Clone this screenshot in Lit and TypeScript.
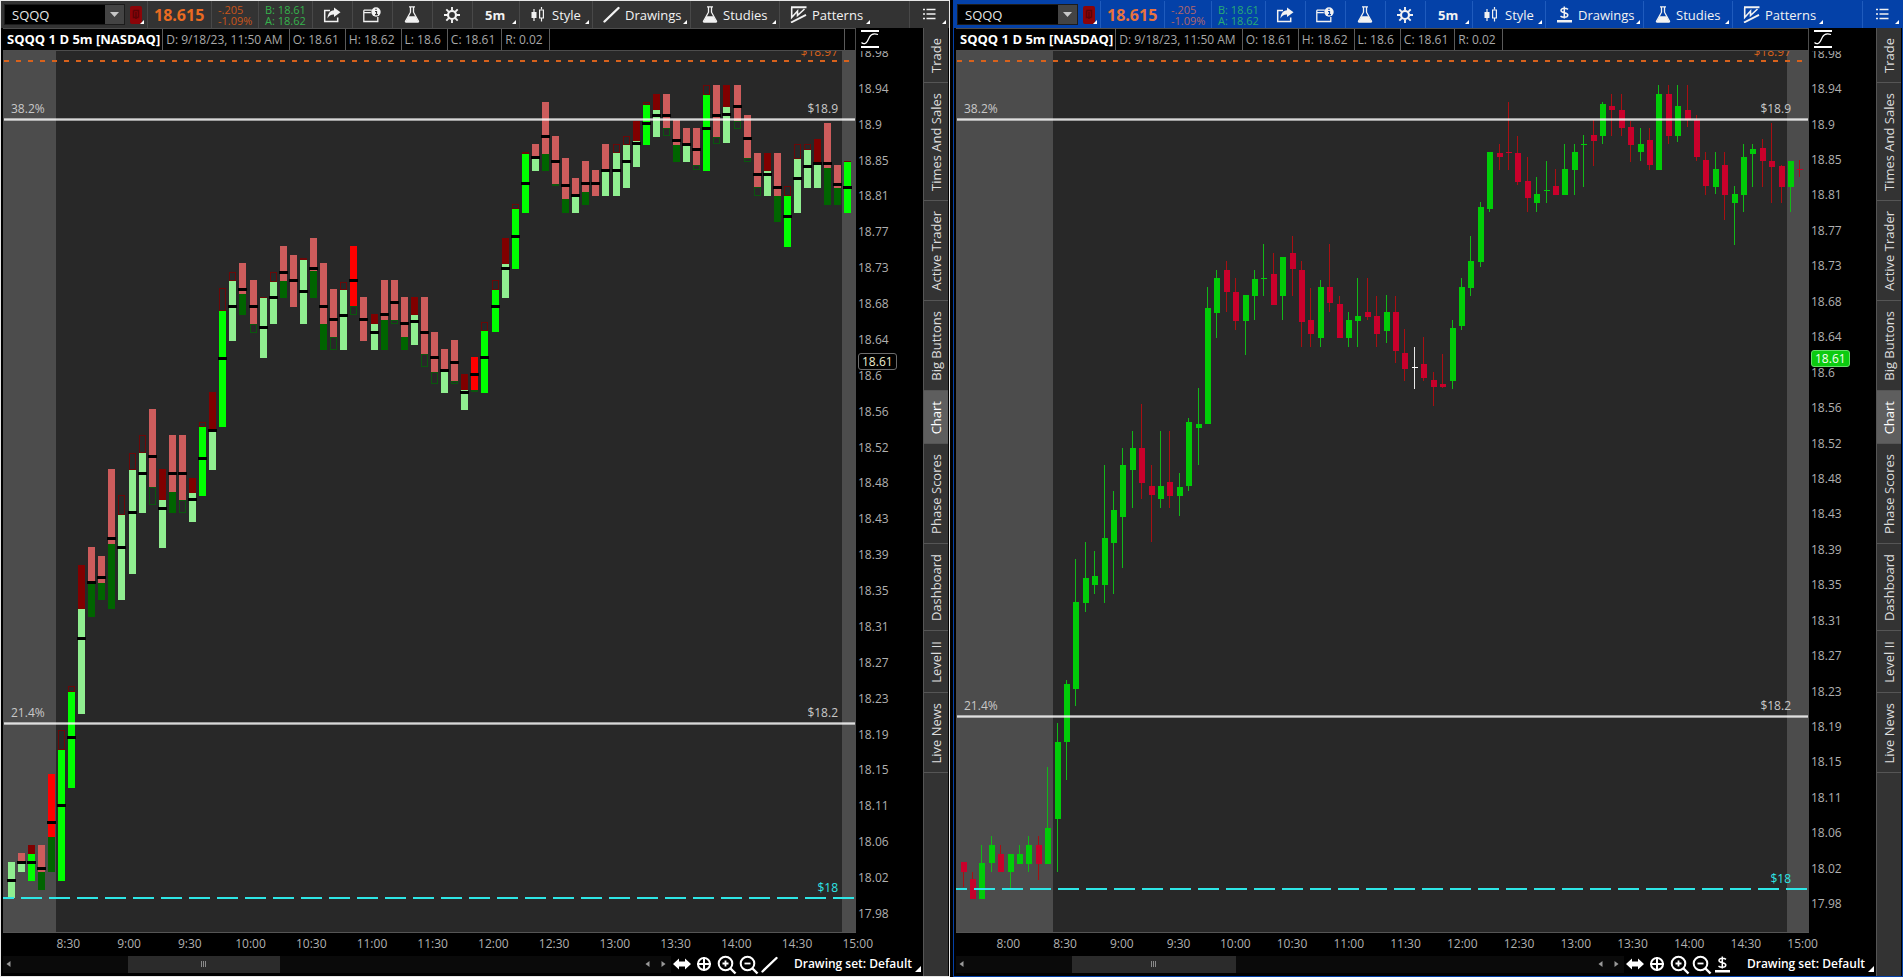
import { LitElement, html, svg, css, nothing } from "lit";
import { customElement, property } from "lit/decorators.js";

/** Drawing area shared by both charts, in chart units. */
const PLOT_W = 853;
const PLOT_H = 881;

type Level = { y: number; kind: "solid" | "dash" | "dots"; label: string; price: string };

interface ChartConfig {
  mode: "profile" | "candles";
  sessions: [number, number][];
  levels: Level[];
  times: string[];
  timePad: string;
  axisPad: string;
  tagY: number;
  thumb: [number, number, number];
  tailCell: boolean;
  tool: "line" | "dollar";
}

const PRICES = [
  "18.98", "18.94", "18.9", "18.85", "18.81", "18.77", "18.73", "18.68", "18.64",
  "18.6", "18.56", "18.52", "18.48", "18.43", "18.39", "18.35", "18.31", "18.27",
  "18.23", "18.19", "18.15", "18.11", "18.06", "18.02", "17.98",
];

const GADGETS = [
  "Trade", "Times And Sales", "Active Trader", "Big Buttons", "Chart",
  "Phase Scores", "Dashboard", "Level II", "Live News",
];

const READOUT = ["D: 9/18/23, 11:50 AM", "O: 18.61", "H: 18.62", "L: 18.6", "C: 18.61", "R: 0.02"];

const FILLS: Record<string, string> = {
  r: "#ff0000", R: "#800000", p: "#cd5c5c",
  g: "#00ff00", G: "#006400", l: "#90ee90",
};
const OUTLINES: Record<string, string> = { o: "#6a0808", u: "#0a560e" };

/** One bar per entry: "<segment code><top>-<bottom> ... k<mark>". */
const PROFILE = `l811-847 k829|p802-811 l811-821 k811|R794-803 g803-830 k811|p794-821 G821-839 k817
r723-786 G786-821 k771|o679-699 g699-830 k754|o635-641 g641-737 k686|R514-558 l558-663 k587
p496-532 G532-566 k531|p505-532 G532-549 k526|p418-493 G493-558 k487|o444-464 l464-549 k496
o402-419 l419-523 k461|o384-402 l402-462 k422|p358-436 u436-454 k405|R418-449 l449-497 k457
p384-441 G441-462 k422|p384-449 u449-462 k422|R427-442 l442-471 k448|o371-376 g376-445 k407
R341-379 l380-419 k379|o237-260 g260-376 k307|o221-230 l230-290 k255|p212-243 G243-264 k238
p229-273 u273-282 k255|o246-247 l247-307 k276|o221-231 l231-273 k246|p195-230 G230-247 k221
p204-256 k229|o207-209 l209-273 k240|p187-220 G220-247 k217|p212-273 G273-299 k255
p238-286 u286-299 k268|o231-239 l239-299 k264|r195-255 u255-264 k229|p246-290 k268
R263-273 l273-299 k281|p229-269 G269-299 k263|p229-269 u269-273 k251|p246-286 G286-299 k272
R246-264 l264-294 k270|p246-303 u303-316 k281|p281-321 u321-333 k306|p298-320 l320-342 k319
p289-330 u330-333 k311|R323-339 l339-359 k341|r306-339 u339-341 k323|o271-280 g280-342 k306
o229-239 g239-281 k255|R187-213 l213-247 k217|o153-158 g158-218 k185|o101-103 g103-162 k132
p93-107 l107-120 k106|p51-103 G103-120 k85|p85-133 u133-135 k110|p107-148 G148-162 k134
p127-144 l145-162 k144|p110-141 G141-154 k132|p119-145 k132|p93-120 l120-145 k119
o93-102 l102-145 k119|o85-94 l94-137 k110|R70-90 l90-116 k92|o51-54 g54-94 k72
R43-59 l59-86 k64|p43-77 u77-85 k64|p69-94 G94-111 k89|p77-93 l94-111 k93
p77-114 u114-119 k98|o34-44 g44-120 k77|p34-86 u86-93 k64|R34-56 l56-92 k63
p34-70 u70-78 k55|p64-107 u107-111 k87|p102-136 u136-145 k123|R102-120 l120-145 k123
p102-145 G145-171 k136|o135-145 g145-196 k165|o93-108 l108-162 k127|o93-99 l99-137 k115
R88-111 l112-137 k112|p72-117 G117-154 k112|p114-137 G137-154 k133|o110-111 g111-162 k136`;

/** One candle per entry: colour, high, body top, body bottom, low. */
const CANDLES = `r 811 811 821 836,r 821 828 848 848,g 794 812 848 848,g 785 794 812 821,r 794 803 821 821,
g 803 803 821 837,g 794 803 813 813,g 785 794 813 821,r 785 794 813 829,g 716 777 813 813,
g 672 691 768 821,g 629 633 691 729,g 508 551 638 655,g 491 527 552 561,g 500 525 534 543,
g 414 487 534 552,g 440 459 492 543,g 397 414 466 517,g 380 397 419 457,r 353 397 432 448,
r 414 435 444 491,g 380 435 448 457,r 380 431 445 457,g 422 436 445 465,g 367 371 435 440,
g 337 373 377 414,g 236 257 373 373,g 219 227 262 287,r 210 219 241 261,r 227 241 270 279,
g 244 244 270 304,g 219 228 245 269,g 193 227 228 245,r 202 223 254 254,g 206 206 245 269,
r 185 202 218 245,r 210 219 271 296,r 237 269 283 296,g 229 236 287 296,r 193 236 252 261,
r 245 253 287 287,g 261 269 287 296,g 227 265 270 296,r 227 261 266 269,r 245 265 283 296,
g 244 261 280 292,r 245 261 300 312,r 278 302 318 330,w 296 316 317 338,r 286 313 327 330,
r 321 329 336 355,r 303 333 336 337,g 269 277 330 338,g 227 236 275 279,g 185 210 237 245,
g 151 156 211 216,g 101 101 158 161,r 93 102 106 119,r 51 101 102 119,r 85 102 131 134,
r 106 130 147 161,g 126 143 152 161,g 110 139 140 152,r 118 135 144 144,g 93 118 144 144,
g 93 101 119 144,g 84 93 94 136,r 69 84 90 115,g 51 53 85 93,r 43 55 59 85,
r 43 59 77 85,r 70 76 94 111,g 77 93 101 110,r 77 89 114 119,g 34 43 119 119,
r 34 43 85 93,g 34 55 85 91,r 34 59 69 76,r 64 69 106 110,r 101 109 135 144,
g 101 118 136 143,r 101 114 144 169,g 135 143 152 194,g 93 106 144 161,g 93 98 103 136,
r 88 97 110 136,r 72 110 116 152,r 114 115 136 152,g 110 110 136 161,r 109 118 119 126`;

const BODY: Record<string, string> = { r: "#c9002b", g: "#00cc08", w: "#ffffff" };
const WICK: Record<string, string> = { r: "#a80f12", g: "#12b818", w: "#e8e8e8" };

const LEFT: ChartConfig = {
  mode: "profile",
  sessions: [[0, 53], [839, 853]],
  levels: [
    { y: 10, kind: "dots", label: "", price: "$18.97" },
    { y: 68, kind: "solid", label: "38.2%", price: "$18.9" },
    { y: 672, kind: "solid", label: "21.4%", price: "$18.2" },
    { y: 847, kind: "dash", label: "", price: "$18" },
  ],
  times: ["8:30", "9:00", "9:30", "10:00", "10:30", "11:00", "11:30", "12:00", "12:30",
    "13:00", "13:30", "14:00", "14:30", "15:00"],
  timePad: "pad-a",
  axisPad: "axis-a",
  tagY: 310,
  thumb: [125, 152, 391],
  tailCell: true,
  tool: "line",
};

const RIGHT: ChartConfig = {
  mode: "candles",
  sessions: [[0, 97], [831, 853]],
  levels: [
    { y: 10, kind: "dots", label: "", price: "$18.97" },
    { y: 68, kind: "solid", label: "38.2%", price: "$18.9" },
    { y: 665, kind: "solid", label: "21.4%", price: "$18.2" },
    { y: 838, kind: "dash", label: "", price: "$18" },
  ],
  times: ["8:00", "8:30", "9:00", "9:30", "10:00", "10:30", "11:00", "11:30", "12:00", "12:30",
    "13:00", "13:30", "14:00", "14:30", "15:00"],
  timePad: "pad-b",
  axisPad: "axis-b",
  tagY: 307,
  thumb: [116, 164, 388],
  tailCell: false,
  tool: "dollar",
};

const FLASK = svg`<path d="M5 .8h6M6.5 1v5.2L1.6 15a.6.6 0 0 0 .5 1h11.8a.6.6 0 0 0 .5-1L9.500 6.200V1" fill="none" stroke="currentColor" stroke-width="1.300"/><path d="M4.600 10.200h6.800L14.500 16h-13z" fill="currentColor"/>`;
const DOLLAR = svg`<path d="M12 3.400C11 2.600 9.800 2.300 8.300 2.300 6.400 2.300 5 3.100 5 4.500c0 3 6.800 1.500 6.800 4.400 0 1.500-1.500 2.300-3.500 2.300-1.500 0-2.900-.4-3.800-1.100M8.300.5v12" fill="none" stroke="currentColor" stroke-width="1.500"/><path d="M1 14h15v2.500H1z" fill="currentColor"/>`;

const ICONS: Record<string, unknown> = {
  share: html`<svg width="18" height="16" viewBox="0 0 18 16"><path d="M7 3.500H1.700v11h13v-4" fill="none" stroke="currentColor" stroke-width="1.500"/><path d="M11 .5 17.500 5.200 11 10V7.400C8 7.300 5.800 8.500 4.500 11.500 4.700 6.800 6.800 3.700 11 3.300z" fill="currentColor"/></svg>`,
  info: html`<svg width="18" height="16" viewBox="0 0 18 16"><path d="M.8 3.200h8M.8 3.200v11.300h14V10M.8 5.700h7" fill="none" stroke="currentColor" stroke-width="1.300"/><circle cx="13" cy="5" r="4.700" fill="currentColor"/><path d="M12 4.500h1.500v3M12 7.700h3M13 1.800v1.300" fill="none" stroke="var(--bar)" stroke-width="1.200"/></svg>`,
  flask: html`<svg width="16" height="17" viewBox="0 0 16 17">${FLASK}</svg>`,
  gear: html`<svg width="16" height="16" viewBox="0 0 16 16"><circle cx="8" cy="8" r="4" fill="none" stroke="currentColor" stroke-width="2.200"/><path d="M8 0v3.500M8 12.500V16M0 8h3.500M12.500 8H16M2.300 2.300l2.500 2.500M11.200 11.200l2.500 2.500M13.700 2.300l-2.500 2.500M4.800 11.200l-2.500 2.500" stroke="currentColor" stroke-width="1.900"/></svg>`,
  style: html`<svg width="14" height="16" viewBox="0 0 14 16"><path d="M3 2v12M10.500 0v2.500M10.500 11v3.500" stroke="currentColor" stroke-width="1.200"/><path d="M.5 5h5v6h-5z" fill="currentColor"/><path d="M8.600 3h3.800v8H8.600z" fill="none" stroke="currentColor" stroke-width="1.200"/></svg>`,
  line: html`<svg width="17" height="17" viewBox="0 0 17 17"><path d="M1.500 15.500 15.500 2" stroke="currentColor" stroke-width="2.400" stroke-linecap="round"/></svg>`,
  dollar: html`<svg width="17" height="17" viewBox="0 0 17 17">${DOLLAR}</svg>`,
  patterns: html`<svg width="17" height="17" viewBox="0 0 17 17"><path d="M1 1.200h15.500M1 16.500 16 8.800" stroke="currentColor" stroke-width="1.900" fill="none"/><path d="M1.700 2v9.500L7.500 5v4.500L14.500 3" fill="none" stroke="currentColor" stroke-width="1.600"/></svg>`,
  list: html`<svg width="13" height="13" viewBox="0 0 13 13"><path d="M0 1.500h2M3.500 1.500H12.500M0 6h2M3.500 6H12.500M0 10.500h2M3.500 10.500H12.500" stroke="currentColor" stroke-width="1.500"/></svg>`,
  curve: html`<svg width="18" height="18" viewBox="0 0 18 18"><path d="M0 1h18M0 17h18" stroke="#fff" stroke-width="2"/><path d="M.5 12.500c2 2 4.500 1.500 6-1.500l2-4c1.500-3 4-4 8.500-2.500" fill="none" stroke="#fff" stroke-width="1.300"/></svg>`,
  pan: html`<svg width="18" height="12" viewBox="0 0 18 12"><path d="M0 6 6 .5V3.500h6V.5L18 6l-6 5.500v-3H6v3z" fill="#fff"/></svg>`,
  cross: html`<svg width="18" height="16" viewBox="0 0 18 16"><circle cx="9" cy="8" r="6" fill="none" stroke="#fff" stroke-width="2"/><path d="M9 1v14M2 8h14" stroke="#fff" stroke-width="2"/></svg>`,
  zoomin: html`<svg width="20" height="20" viewBox="0 0 20 20"><circle cx="8.500" cy="8.500" r="6.800" fill="none" stroke="#fff" stroke-width="2"/><path d="M13.500 13.500l5 5" stroke="#fff" stroke-width="2.400"/><path d="M8.500 5.500v6M5.500 8.500h6" stroke="#fff" stroke-width="1.800"/></svg>`,
  zoomout: html`<svg width="20" height="20" viewBox="0 0 20 20"><circle cx="8.500" cy="8.500" r="6.800" fill="none" stroke="#fff" stroke-width="2"/><path d="M13.500 13.500l5 5" stroke="#fff" stroke-width="2.400"/><path d="M5.500 8.500h6" stroke="#fff" stroke-width="1.800"/></svg>`,
  badge: html`<svg width="12" height="18" viewBox="0 0 12 18"><rect width="12" height="18" rx="2" fill="#8c0408"/><path d="M3.500 4.500h5v7M8.500 11.500h-5v-7M6 6v7" fill="none" stroke="#5c0306" stroke-width="1.500"/></svg>`,
};

@customElement("price-chart")
export class PriceChart extends LitElement {
  @property({ attribute: false }) config!: ChartConfig;

  static styles = css`
    :host { display: block; position: relative; overflow: hidden; background: #282828; }
    .plot { position: absolute; inset: 0; width: 100%; height: 100%; display: block; }
    .level { position: absolute; font-size: 12px; line-height: 16px; padding-bottom: 2px; color: #c8c8c8; }
    .name { left: 8px; }
    .price { right: 18px; }
    .dash { color: #2ee6e6; }
    .dots { color: #d8621c; padding-bottom: 1px; }
  `;

  private bars() {
    return PROFILE.split(/[|\n]/).map((bar, i) => {
      const x = 5 + 10 * i + Math.floor(i / 12);
      return bar.split(" ").map((part) => {
        const code = part[0];
        const [top, bottom] = part.slice(1).split("-").map(Number);
        if (code === "k") return svg`<rect x=${x - 1} y=${top - 1} width="9" height="3" fill="#000"/>`;
        if (OUTLINES[code]) {
          return svg`<rect x=${x + 0.5} y=${top + 0.5} width="6" height=${Math.max(bottom - top - 1, 1)} fill="none" stroke=${OUTLINES[code]}/>`;
        }
        return svg`<rect x=${x} y=${top} width="7" height=${bottom - top} fill=${FILLS[code]}/>`;
      });
    });
  }

  private candles() {
    return CANDLES.split(",").map((entry, i) => {
      const [code, ...rest] = entry.trim().split(" ");
      const [high, top, bottom, low] = rest.map(Number);
      const x = 5 + Math.floor(9.404 * i);
      return svg`
        <rect x=${x + 2} y=${high} width="1" height=${low - high} fill=${WICK[code]}/>
        <rect x=${x} y=${top} width="6" height=${bottom - top} fill=${BODY[code]}/>`;
    });
  }

  private line(l: Level) {
    if (l.kind === "dash") {
      return svg`<line x1="0" x2="852" y1=${l.y} y2=${l.y} stroke="#2ee6e6" stroke-width="2" stroke-dasharray="21 7" stroke-dashoffset="10"/>`;
    }
    if (l.kind === "dots") {
      return svg`<line x1="1" x2="852" y1=${l.y} y2=${l.y} stroke="#d8621c" stroke-width="2" stroke-dasharray="5 7"/>`;
    }
    return svg`
      <rect x="1" y=${l.y - 1} width="851" height="3" fill="#fff" fill-opacity="0.55"/>
      <rect x="1" y=${l.y} width="851" height="1" fill="#fff" fill-opacity="0.6"/>`;
  }

  render() {
    const c = this.config;
    return html`
      <svg class="plot" viewBox="0 0 ${PLOT_W} ${PLOT_H}" preserveAspectRatio="none" shape-rendering="crispEdges" role="img" aria-label="SQQQ five minute price chart">
        ${c.sessions.map(([a, b]) => svg`<rect x=${a} y="0" width=${b - a} height=${PLOT_H} fill="#4c4c4c"/>`)}
        ${c.mode === "profile" ? this.bars() : this.candles()}
        ${c.levels.map((l) => this.line(l))}
      </svg>
      ${c.levels.map((l) => {
        const bottom = `bottom:${(100 * (PLOT_H - l.y)) / PLOT_H}%`;
        return html`
          ${l.label ? html`<span class="level name" style=${bottom}>${l.label}</span>` : nothing}
          <span class="level price ${l.kind}" style=${bottom}>${l.price}</span>`;
      })}
    `;
  }
}

@customElement("chart-panel")
export class ChartPanel extends LitElement {
  @property({ attribute: false }) config!: ChartConfig;
  @property({ type: Boolean, reflect: true }) active = false;

  static styles = css`
    :host {
      --bar: #333333;
      --rule: #484848;
      --edge: #e6e6e6;
      display: grid;
      grid-template: 27px minmax(0, 1fr) / minmax(0, 1fr) 25px;
      border: 1px solid var(--edge);
      padding: 0 1px 0 2px;
      background: #000;
      color: #e4e4e4;
      min-width: 0;
    }
    :host([active]) {
      --bar: #0441a8;
      --rule: #1f5bbd;
      --edge: #0441a8;
    }
    button, select { font: inherit; color: inherit; border: 0; background: none; padding: 0; margin: 0; border-radius: 0; }
    svg { display: block; flex: none; }

    .toolbar {
      grid-column: 1 / -1; display: flex; background: var(--bar); margin: 0 -1px 0 -2px;
      padding-left: 3px; font-size: 13px; line-height: 18px;
    }
    .symbol { position: relative; width: 121px; height: 21px; margin-top: 3px; background: #000; }
    .symbol select { appearance: none; width: 100%; height: 100%; padding-left: 7px; box-sizing: border-box; border: 1px solid #1c1c1c; font-size: 13px; color: #e8e8e8; }
    .arrow { position: absolute; right: 1px; top: 1px; width: 19px; height: 19px; background: #444; pointer-events: none; display: grid; place-items: center; }
    .link { width: 22px; padding-left: 5px; justify-content: flex-start; }
    .cell { position: relative; box-sizing: border-box; border-left: 1px solid var(--rule); display: flex; align-items: center; color: #f2f2f2; }
    .cell.first { border-left: 0; }
    .last { width: 64px; padding-left: 6px; color: #ea6b22; font-weight: 700; font-size: 16px; }
    .stack { font-size: 11px; line-height: 11px; padding-left: 6px; align-items: flex-start; justify-content: center; flex-direction: column; }
    .change { width: 47px; color: #c9551a; }
    .quote { width: 54px; color: #35b24c; }
    :host([active]) .change { color: #b2666a; }
    :host([active]) .last { color: #e8733e; }
    :host([active]) .quote { color: #27ab74; }
    .icon { width: 40px; justify-content: center; padding-right: 2px; }
    .span { width: 47px; padding-left: 12px; font-weight: 700; }
    .menu { gap: 5px; padding-left: 10px; }
    .w-style { width: 73px; gap: 7px; padding-left: 11px; }
    .w-draw { width: 98px; }
    .w-study { width: 89px; padding-left: 11px; }
    .w-pattern { flex: 1; }
    .w-list { width: 40px; padding-left: 13px; }
    .more::after {
      content: ""; position: absolute; right: 3px; bottom: 4px;
      border: 2px solid transparent; border-right-color: #fff; border-bottom-color: #fff;
    }
    .w-pattern::after { right: auto; left: 86px; }

    .main { display: grid; grid-template: 23px minmax(0, 1fr) 22px 21px / minmax(0, 1fr) 67px; min-height: 0; }
    .readout {
      display: flex; box-sizing: border-box; border: solid #4d4d4d; border-width: 1px 1px 1px 0;
      font-size: 12px; line-height: 21px; color: #a8a8a8; white-space: nowrap; overflow: hidden;
    }
    .readout span { border-right: 1px solid #5a5a5a; padding: 0 6px 0 3px; }
    .readout .title { color: #fff; font-size: 13px; font-weight: 700; padding: 0 2px 0 4px; }
    .readout .tail { margin-left: auto; border-right: 0; border-left: 1px solid #5a5a5a; padding: 0; width: 10px; }
    .scale-tool { padding: 2px 0 0 5px; }
    price-chart { border-bottom: 1px solid #555; }

    .axis { position: relative; overflow: hidden; font-size: 12px; line-height: 16px; color: #b0b0b0; display: flex; }
    .axis ol { list-style: none; margin: 0; padding: 0 0 0 2px; display: flex; flex-direction: column; }
    .axis li { flex: 1; display: flex; align-items: center; min-height: 0; }
    .axis-a ol { margin: -16px 0 1px; }
    .axis-b ol { margin: -15px 0 11px; }
    .tag {
      position: absolute; left: 2px; width: 39px; height: 17px; margin-top: -8px; box-sizing: border-box;
      border: 1px solid #6c6c6c; border-radius: 3px; background: #000; color: #ececd0; line-height: 15px; padding-left: 3px;
    }
    :host([active]) .tag { background: #0ccb10; border-color: #66e068; color: #f4fff0; }

    .times { grid-column: 1 / -1; display: flex; font-size: 12px; line-height: 21px; color: #b0b0b0; }
    .times span { flex: 1; text-align: center; }
    .pad-a { padding: 0 35px; }
    .pad-b { padding: 0 45px 0 24px; }

    .foot { grid-column: 1 / -1; display: flex; align-items: center; box-sizing: border-box; padding: 0 1px 3px 0; }
    .scroll { flex: 1; display: grid; height: 17px; background: #0a0a0a; color: #9a9a9a; }
    .scroll div { display: flex; align-items: center; }
    .scroll .left { padding-left: 2px; }
    .scroll .right { justify-content: flex-end; gap: 9px; padding-right: 4px; }
    .scroll .thumb { justify-content: center; gap: 1px; background: #2b2b2b; }
    .thumb i { width: 1px; height: 6px; background: #8a8a8a; }
    .tools { display: flex; align-items: center; gap: 4px; margin-left: 2px; }
    .tools button { width: 18px; height: 18px; display: grid; place-items: center; color: #fff; }
    .set { position: relative; margin-left: 15px; padding-right: 10px; font-size: 12px; font-weight: 600; line-height: 18px; color: #fff; white-space: nowrap; }
    .set::after { content: ""; position: absolute; right: 1px; bottom: 1px; border: 3px solid transparent; border-right-color: #fff; border-bottom-color: #fff; }

    .gadgets { background: #333; border-left: 1px solid #555; display: flex; flex-direction: column; min-height: 0; }
    .gadgets button {
      border-bottom: 1px solid #555; padding: 10px 0 9px; font-size: 13px; line-height: 24px; color: #dedede;
      display: flex; justify-content: center;
    }
    .gadgets button span { writing-mode: vertical-rl; transform: rotate(180deg); white-space: nowrap; }
    .gadgets .on { background: #5e5e5e; color: #fff; }
  `;

  private arrow(left: boolean) {
    return html`<svg width="7" height="8" viewBox="0 0 7 8"><path d=${left ? "M5.500 1v6L1.500 4z" : "M1.500 1v6l4-3z"} fill="currentColor"/></svg>`;
  }

  render() {
    const c = this.config;
    const [before, thumb, after] = c.thumb;
    return html`
      <div class="toolbar">
        <label class="symbol">
          <select aria-label="Symbol"><option>SQQQ</option></select>
          <span class="arrow"><svg width="9" height="5" viewBox="0 0 9 5"><path d="M0 0h9L4.500 5z" fill="#c8c8c8"/></svg></span>
        </label>
        <button class="cell first link more" aria-label="Symbol link">${ICONS.badge}</button>
        <span class="cell last">18.615</span>
        <span class="cell stack change"><span>-.205</span><span>-1.09%</span></span>
        <span class="cell stack quote"><span>B: 18.61</span><span>A: 18.62</span></span>
        <button class="cell icon" aria-label="Share">${ICONS.share}</button>
        <button class="cell icon" aria-label="Company info">${ICONS.info}</button>
        <button class="cell icon" aria-label="Edit studies">${ICONS.flask}</button>
        <button class="cell icon" aria-label="Settings">${ICONS.gear}</button>
        <button class="cell span more">5m</button>
        <button class="cell menu w-style more">${ICONS.style}Style</button>
        <button class="cell menu w-draw more">${ICONS[c.tool]}Drawings</button>
        <button class="cell menu w-study more">${ICONS.flask}Studies</button>
        <button class="cell menu w-pattern more">${ICONS.patterns}Patterns</button>
        <button class="cell w-list more" aria-label="Chart menu">${ICONS.list}</button>
      </div>

      <div class="main">
        <div class="readout">
          <span class="title">SQQQ 1 D 5m [NASDAQ]</span>
          ${READOUT.map((t) => html`<span>${t}</span>`)}
          ${c.tailCell ? html`<span class="tail"></span>` : nothing}
        </div>
        <div class="scale-tool">${ICONS.curve}</div>

        <price-chart .config=${c}></price-chart>
        <div class="axis ${c.axisPad}">
          <ol>${PRICES.map((p) => html`<li>${p}</li>`)}</ol>
          <span class="tag" style="top:${(100 * c.tagY) / PLOT_H}%">18.61</span>
        </div>

        <div class="times ${c.timePad}">${c.times.map((t) => html`<span>${t}</span>`)}</div>

        <div class="foot">
          <div class="scroll" style="grid-template-columns:${before}fr ${thumb}fr ${after}fr">
            <div class="left">${this.arrow(true)}</div>
            <div class="thumb"><i></i><i></i><i></i></div>
            <div class="right">${this.arrow(true)}${this.arrow(false)}</div>
          </div>
          <div class="tools">
            <button aria-label="Pan">${ICONS.pan}</button>
            <button aria-label="Crosshair">${ICONS.cross}</button>
            <button aria-label="Zoom in">${ICONS.zoomin}</button>
            <button aria-label="Zoom out">${ICONS.zoomout}</button>
            <button aria-label="Drawing tool">${ICONS[c.tool]}</button>
          </div>
          <button class="set">Drawing set: Default</button>
        </div>
      </div>

      <nav class="gadgets" aria-label="Gadgets">
        ${GADGETS.map((g) => html`<button class=${g === "Chart" ? "on" : ""}><span>${g}</span></button>`)}
      </nav>
    `;
  }
}

@customElement("app-root")
export class AppRoot extends LitElement {
  static styles = css`
    :host {
      display: grid;
      grid-template-columns: minmax(0, 1fr) minmax(0, 1fr);
      gap: 3px;
      height: 100vh;
      background: #000;
      font-family: "Open Sans", "Noto Sans", sans-serif;
    }
  `;

  render() {
    return html`
      <chart-panel .config=${LEFT}></chart-panel>
      <chart-panel active .config=${RIGHT}></chart-panel>
    `;
  }
}
